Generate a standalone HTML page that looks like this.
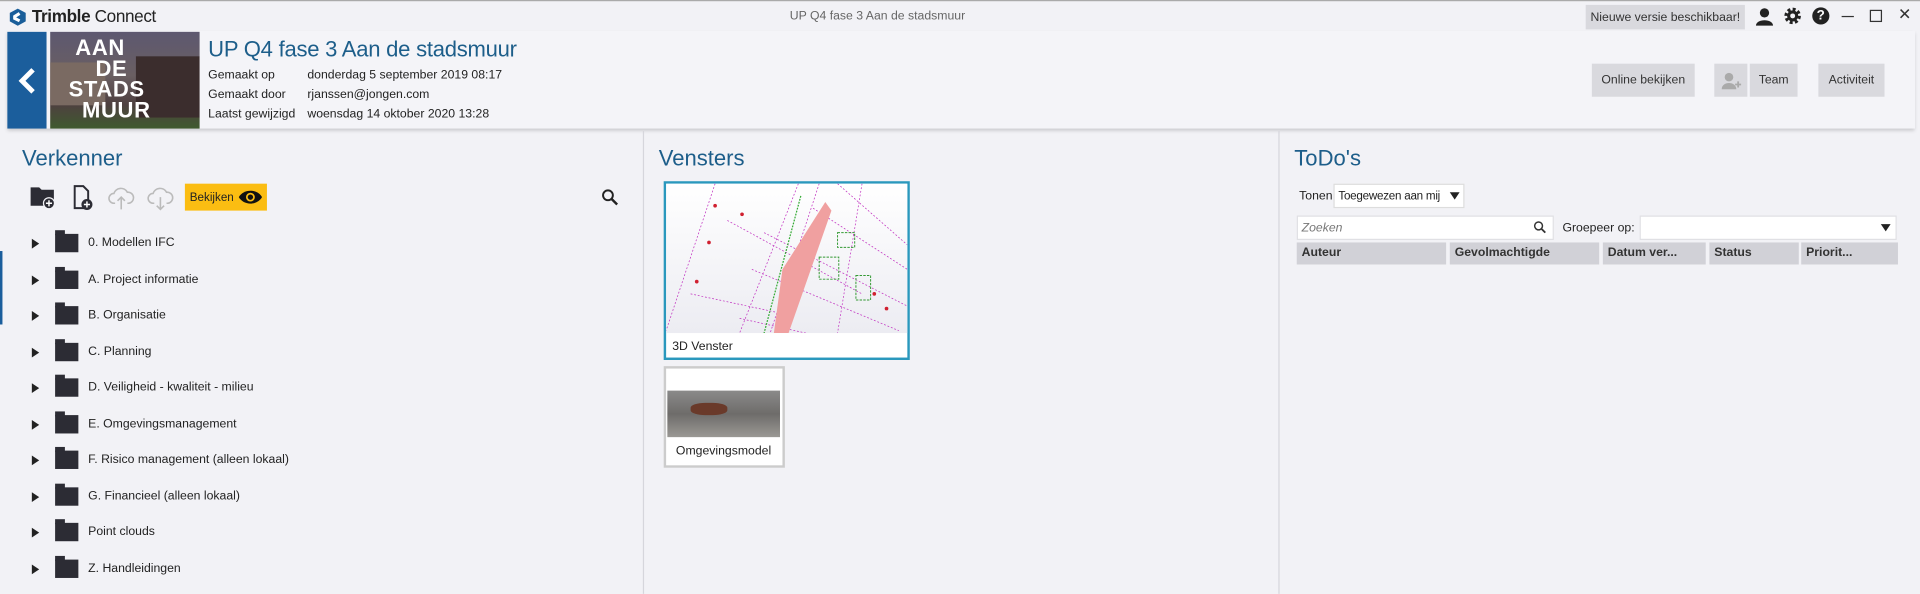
<!DOCTYPE html>
<html><head><meta charset="utf-8"><style>
html,body{margin:0;padding:0;width:1920px;height:593px;overflow:hidden;background:#f2f2f6;}
#s{position:absolute;left:0;top:0;width:1568px;height:485px;transform:scale(1.22449);transform-origin:0 0;font-family:"Liberation Sans",sans-serif;color:#222;font-size:10px;background:#f2f2f6;}
.a{position:absolute;white-space:nowrap;}
.btn{position:absolute;background:#d9d9de;color:#333;font-size:10px;display:flex;align-items:center;justify-content:center;white-space:nowrap;}
.h{color:#1d5e8a;font-size:18px;}
.row{position:absolute;left:29px;height:20px;}
.row .t{position:absolute;left:-3px;top:5px;width:0;height:0;border-left:6px solid #222;border-top:4px solid transparent;border-bottom:4px solid transparent;}
.row .f{position:absolute;left:16px;top:1px;width:19px;height:15px;background:#2c2c34;}
.row .f:before{content:"";position:absolute;left:0;top:-3px;width:8px;height:4px;background:#2c2c34;}
.row span{position:absolute;left:43px;top:3px;white-space:nowrap;font-size:10px;}
.th{position:absolute;top:198px;height:18px;background:#d1d1d7;font-weight:bold;font-size:10px;color:#333;line-height:18px;padding-left:4px;box-sizing:border-box;}
</style></head><body><div id="s">
<div class="a" style="left:0;top:0;width:1568px;height:1px;background:#aaa"></div>
<svg class="a" style="left:7px;top:6px" width="15" height="16" viewBox="0 0 15 16"><path d="M7.5 1 L14 4.5 V11.5 L7.5 15 L1 11.5 V4.5 Z" fill="#1a5e9a"/><path d="M9 5 L5 7.5 V9 L9 11" stroke="#fff" stroke-width="2.5" fill="none"/></svg>
<div class="a" style="left:26px;top:5px;font-size:14px;color:#222;letter-spacing:-0.3px"><b>Trimble</b> Connect</div>
<div class="a" style="left:645px;top:8px;color:#666;font-size:10px">UP Q4 fase 3 Aan de stadsmuur</div>
<div class="btn" style="left:1295px;top:4px;width:130px;height:20px;">Nieuwe versie beschikbaar!</div>
<svg class="a" style="left:1433px;top:6px" width="16" height="15" viewBox="0 0 16 15"><circle cx="8" cy="4.5" r="3.8" fill="#222"/><path d="M1 15 C1 9 15 9 15 15Z" fill="#222"/></svg>
<svg class="a" style="left:1456px;top:5px" width="16" height="16" viewBox="0 0 16 16"><circle cx="8" cy="8" r="5" fill="none" stroke="#222" stroke-width="3.5" stroke-dasharray="2.2 1.7"/><circle cx="8" cy="8" r="4.5" fill="#222"/><circle cx="8" cy="8" r="2" fill="#f2f2f6"/></svg>
<div class="a" style="left:1480px;top:6px;width:14px;height:14px;border-radius:50%;background:#222;color:#fff;font-weight:bold;font-size:11px;text-align:center;line-height:14px">?</div>
<div class="a" style="left:1504px;top:13px;width:10px;height:1px;background:#333"></div>
<div class="a" style="left:1527px;top:8px;width:8px;height:8px;border:1px solid #333"></div>
<div class="a" style="left:1550px;top:4px;font-size:13px;color:#333">✕</div>
<div class="a" style="left:6px;top:25px;width:1558px;height:80px;background:#f4f4f8;box-shadow:0 2px 3px rgba(0,0,0,0.18)"></div>
<div class="a" style="left:6px;top:26px;width:32px;height:79px;background:#1b5e9c"></div>
<svg class="a" style="left:12px;top:54px" width="20" height="24" viewBox="0 0 20 24"><path d="M15 3 L6 12 L15 21" stroke="#fff" stroke-width="4" fill="none"/></svg>
<div class="a" style="left:41px;top:26px;width:122px;height:79px;background:linear-gradient(180deg,#5d5870 0%,#6a5f62 45%,#4e4040 75%,#3f5a2e 100%);overflow:hidden">
<div class="a" style="left:70px;top:20px;width:52px;height:50px;background:#3b2d2d"></div>
<div class="a" style="left:0;top:25px;width:45px;height:35px;background:#7a6a62"></div>
<div class="a" style="left:15px;top:5px;color:#fff;font-weight:bold;font-size:18px;line-height:17px;letter-spacing:0.5px">&nbsp;AAN<br>&nbsp;&nbsp;&nbsp;&nbsp;DE<br>STADS<br>&nbsp;&nbsp;MUUR</div>
</div>
<div class="a" style="left:170px;top:30px;font-size:18px;color:#1d5e8a;letter-spacing:-0.2px">UP Q4 fase 3 Aan de stadsmuur</div>
<div class="a" style="left:170px;top:54px;line-height:16px;font-size:10px">Gemaakt op<br>Gemaakt door<br>Laatst gewijzigd</div>
<div class="a" style="left:251px;top:54px;line-height:16px;font-size:10px">donderdag 5 september 2019 08:17<br>rjanssen@jongen.com<br>woensdag 14 oktober 2020 13:28</div>
<div class="btn" style="left:1300px;top:52px;width:84px;height:27px">Online bekijken</div>
<div class="btn" style="left:1400px;top:52px;width:27px;height:27px"><svg width="16" height="14" viewBox="0 0 16 14"><circle cx="6" cy="4" r="3.5" fill="#aaa"/><path d="M0 14 C0 7 12 7 12 14Z" fill="#aaa"/><path d="M11 10h5M13.5 7.5v5" stroke="#aaa" stroke-width="1.5"/></svg></div>
<div class="btn" style="left:1429px;top:52px;width:39px;height:27px">Team</div>
<div class="btn" style="left:1485px;top:52px;width:54px;height:27px">Activiteit</div>
<div class="a" style="left:525px;top:107px;width:1px;height:378px;background:#d6d6dc"></div>
<div class="a" style="left:1044px;top:107px;width:1px;height:378px;background:#d6d6dc"></div>
<div class="a" style="left:0;top:205px;width:2px;height:60px;background:#1b5e9c"></div>
<div class="a h" style="left:18px;top:119px">Verkenner</div>
<svg class="a" style="left:24px;top:151px" width="22" height="20" viewBox="0 0 22 20"><path d="M1 2h7l2 2h10v13H1z" fill="#2c2c34"/><circle cx="16" cy="15" r="4.5" fill="#2c2c34" stroke="#f2f2f6" stroke-width="1"/><path d="M13.5 15h5M16 12.5v5" stroke="#fff" stroke-width="1.2"/></svg>
<svg class="a" style="left:58px;top:151px" width="20" height="21" viewBox="0 0 20 21"><path d="M3 1h7l4 4v14H3z" fill="none" stroke="#2c2c34" stroke-width="1.6"/><circle cx="13" cy="16" r="4.5" fill="#2c2c34"/><path d="M10.5 16h5M13 13.5v5" stroke="#fff" stroke-width="1.2"/></svg>
<svg class="a" style="left:88px;top:151px" width="22" height="22" viewBox="0 0 22 22"><path d="M6 15H5a4 4 0 0 1 0-8 6 6 0 0 1 11-1 4.5 4.5 0 0 1 1 9h-1" fill="none" stroke="#bbb" stroke-width="1.3"/><path d="M11 20V10M8 13l3-3 3 3" fill="none" stroke="#bbb" stroke-width="1.3"/></svg>
<svg class="a" style="left:120px;top:151px" width="22" height="22" viewBox="0 0 22 22"><path d="M6 15H5a4 4 0 0 1 0-8 6 6 0 0 1 11-1 4.5 4.5 0 0 1 1 9h-1" fill="none" stroke="#bbb" stroke-width="1.3"/><path d="M11 10v10M8 17l3 3 3-3" fill="none" stroke="#bbb" stroke-width="1.3"/></svg>
<div class="a" style="left:151px;top:150px;width:67px;height:22px;background:#fbbd12"></div>
<div class="a" style="left:155px;top:156px;font-size:9.5px">Bekijken</div>
<svg class="a" style="left:194px;top:154px" width="21" height="14" viewBox="0 0 21 14"><path d="M1 7C5 0 16 0 20 7 16 14 5 14 1 7Z" fill="#111"/><circle cx="10.5" cy="7" r="3.6" fill="#fbbd12"/><circle cx="10.5" cy="7" r="2.2" fill="#111"/></svg>
<svg class="a" style="left:491px;top:154px" width="14" height="14" viewBox="0 0 14 14"><circle cx="5.5" cy="5.5" r="4" fill="none" stroke="#222" stroke-width="1.6"/><path d="M8.5 8.5L13 13" stroke="#222" stroke-width="2"/></svg>
<div class="row" style="top:190px"><i class="t"></i><i class="f"></i><span>0. Modellen IFC</span></div>
<div class="row" style="top:219.5px"><i class="t"></i><i class="f"></i><span>A. Project informatie</span></div>
<div class="row" style="top:249px"><i class="t"></i><i class="f"></i><span>B. Organisatie</span></div>
<div class="row" style="top:278.5px"><i class="t"></i><i class="f"></i><span>C. Planning</span></div>
<div class="row" style="top:308px"><i class="t"></i><i class="f"></i><span>D. Veiligheid - kwaliteit - milieu</span></div>
<div class="row" style="top:337.5px"><i class="t"></i><i class="f"></i><span>E. Omgevingsmanagement</span></div>
<div class="row" style="top:367px"><i class="t"></i><i class="f"></i><span>F. Risico management (alleen lokaal)</span></div>
<div class="row" style="top:396.5px"><i class="t"></i><i class="f"></i><span>G. Financieel (alleen lokaal)</span></div>
<div class="row" style="top:426px"><i class="t"></i><i class="f"></i><span>Point clouds</span></div>
<div class="row" style="top:455.5px"><i class="t"></i><i class="f"></i><span>Z. Handleidingen</span></div>
<div class="a h" style="left:538px;top:119px">Vensters</div>
<div class="a" style="left:542px;top:148px;width:197px;height:142px;border:2px solid #2a98bd;background:#fff;overflow:hidden">
<svg width="197" height="122" viewBox="0 0 197 122" style="display:block;background:linear-gradient(#fff,#ececf2)">
<g stroke="#c030c0" stroke-width="0.6" stroke-dasharray="1.5 1.5" fill="none">
<path d="M40 0 L0 120"/><path d="M140 0 L197 50"/><path d="M108 0 L60 122"/><path d="M125 0 L85 122"/><path d="M160 0 L140 122"/>
<path d="M80 40 L197 100"/><path d="M70 70 L190 120"/><path d="M60 110 L150 130"/><path d="M120 20 L197 70"/><path d="M50 30 L160 90"/><path d="M20 90 L90 105"/>
</g>
<path d="M95 70 L130 15 L135 22 L100 122 L88 122Z" fill="#f0a0a0"/>
<path d="M110 10 L80 122" stroke="#3a3" stroke-width="1" stroke-dasharray="1.5 1"/>
<g fill="#d02030"><circle cx="40" cy="18" r="1.5"/><circle cx="35" cy="48" r="1.5"/><circle cx="25" cy="80" r="1.5"/><circle cx="170" cy="90" r="1.5"/><circle cx="62" cy="25" r="1.5"/><circle cx="180" cy="102" r="1.5"/></g>
<g stroke="#393" fill="none" stroke-width="0.8" stroke-dasharray="2 1"><rect x="140" y="40" width="14" height="12"/><rect x="125" y="60" width="16" height="18"/><rect x="155" y="75" width="12" height="20"/></g>
</svg>
<div class="a" style="left:5px;top:128px;font-size:10px">3D Venster</div>
</div>
<div class="a" style="left:542px;top:299px;width:95px;height:79px;border:2px solid #ccc;background:#fff">
<div class="a" style="left:1px;top:18px;width:92px;height:38px;background:linear-gradient(180deg,#8a8a8a,#6e6c6a 50%,#9a9894)"></div>
<div class="a" style="left:20px;top:28px;width:30px;height:10px;background:#6a3a2a;border-radius:40%"></div>
<div class="a" style="left:8px;top:62px;font-size:10px">Omgevingsmodel</div>
</div>
<div class="a h" style="left:1057px;top:119px">ToDo's</div>
<div class="a" style="left:1061px;top:155px;font-size:10px">Tonen</div>
<div class="a" style="left:1089px;top:150px;width:107px;height:20px;background:#fff;border:1px solid #ddd;box-sizing:border-box"></div>
<div class="a" style="left:1093px;top:155px;font-size:9.5px;letter-spacing:-0.2px">Toegewezen aan mij</div>
<div class="a" style="left:1184px;top:157px;border-top:6px solid #222;border-left:4px solid transparent;border-right:4px solid transparent"></div>
<div class="a" style="left:1059px;top:176px;width:210px;height:20px;background:#fff;border:1px solid #e0e0e4;box-sizing:border-box"></div>
<div class="a" style="left:1063px;top:181px;font-size:10px;font-style:italic;color:#777">Zoeken</div>
<svg class="a" style="left:1252px;top:180px" width="11" height="11" viewBox="0 0 11 11"><circle cx="4.5" cy="4.5" r="3.2" fill="none" stroke="#333" stroke-width="1.2"/><path d="M7 7l3 3" stroke="#333" stroke-width="1.5"/></svg>
<div class="a" style="left:1276px;top:181px;font-size:10px">Groepeer op:</div>
<div class="a" style="left:1339px;top:176px;width:210px;height:20px;background:#fff;border:1px solid #e0e0e4;box-sizing:border-box"></div>
<div class="a" style="left:1536px;top:183px;border-top:6px solid #222;border-left:4px solid transparent;border-right:4px solid transparent"></div>
<div class="th" style="left:1059px;width:122px">Auteur</div>
<div class="th" style="left:1184px;width:122px">Gevolmachtigde</div>
<div class="th" style="left:1309px;width:84px">Datum ver...</div>
<div class="th" style="left:1396px;width:73px">Status</div>
<div class="th" style="left:1471px;width:79px">Priorit...</div>
</div></body></html>
